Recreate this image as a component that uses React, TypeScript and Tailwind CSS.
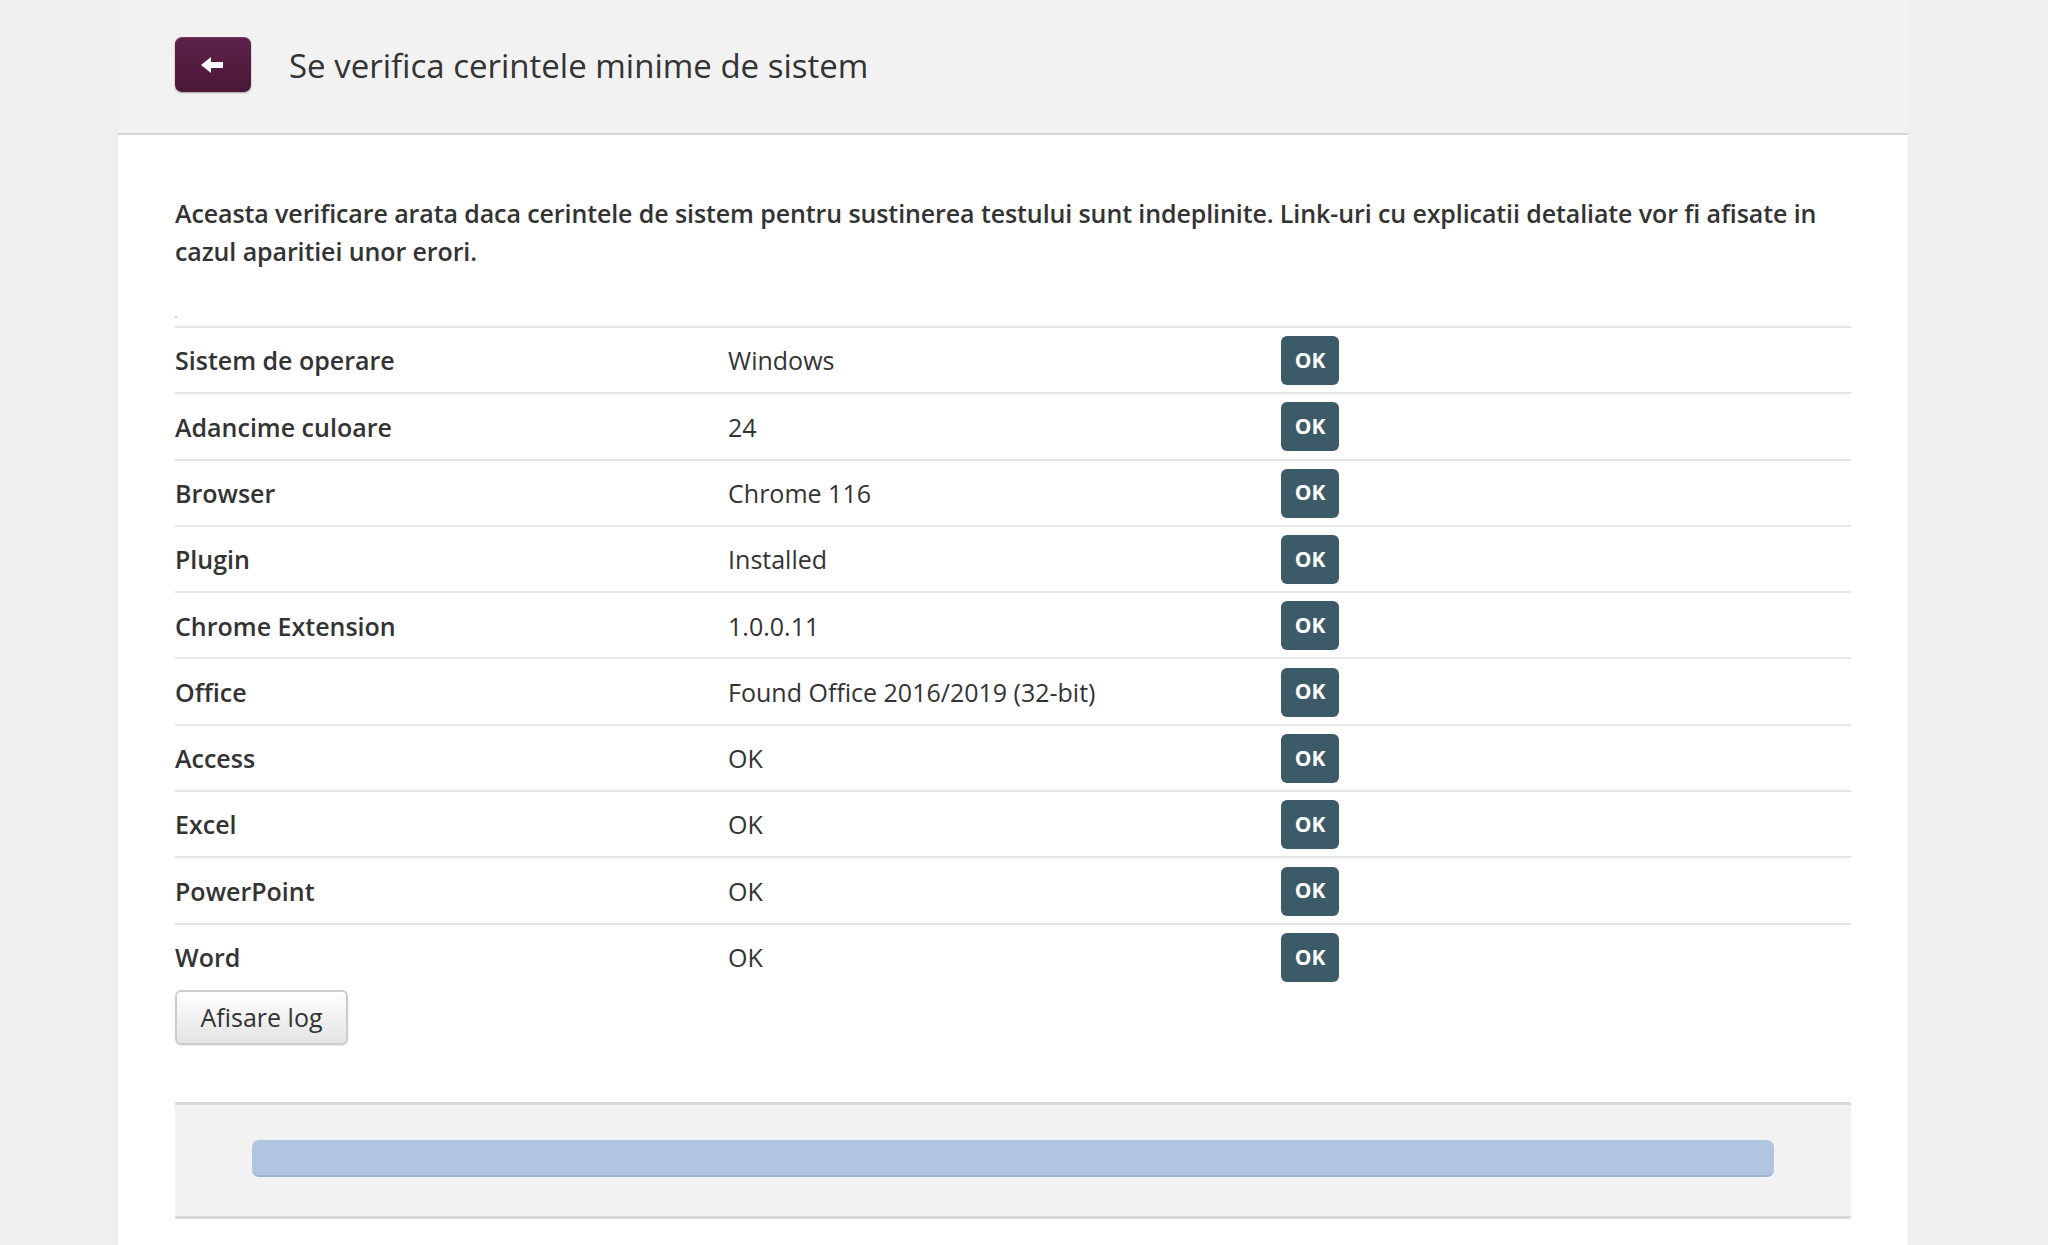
import React from "react";

const rows: [string, string][] = [
  ["Sistem de operare", "Windows"],
  ["Adancime culoare", "24"],
  ["Browser", "Chrome 116"],
  ["Plugin", "Installed"],
  ["Chrome Extension", "1.0.0.11"],
  ["Office", "Found Office 2016/2019 (32-bit)"],
  ["Access", "OK"],
  ["Excel", "OK"],
  ["PowerPoint", "OK"],
  ["Word", "OK"],
];

export default function App() {
  return (
    <div
      className="min-h-[1245px] w-[2048px] bg-[#efefef] text-[#333333]"
      style={{ fontFamily: '"Open Sans", "Noto Sans", sans-serif' }}
    >
      <div className="ml-[118px] w-[1790px] min-h-[1245px] bg-white">
        {/* Header */}
        <div className="h-[135px] bg-[#f2f2f2] border-b-2 border-[#d6d6d6] flex items-center pl-[57px] pb-[4px]">
          <button className="w-[76px] h-[55px] rounded-[7px] bg-gradient-to-b from-[#5e2249] to-[#4a1736] shadow-[0_1px_2px_rgba(0,0,0,0.35)] flex items-center justify-center border-t border-[#7a3a62]">
            <svg width="24" height="16" viewBox="0 0 24 16">
              <path d="M0 8 L10 0 L10 5 L22 5 L22 11 L10 11 L10 16 Z" fill="white" />
            </svg>
          </button>
          <h1 className="ml-[38px] text-[33px] leading-none text-[#333333] pt-[2px]">
            Se verifica cerintele minime de sistem
          </h1>
        </div>

        {/* Body */}
        <div className="px-[57px] pt-[59px]">
          <p className="text-[25px] leading-[38px] font-semibold text-[#333333] whitespace-nowrap tracking-[-0.1px]">
            Aceasta verificare arata daca cerintele de sistem pentru sustinerea testului sunt indeplinite. Link-uri cu explicatii detaliate vor fi afisate in
            <br />
            cazul aparitiei unor erori.
          </p>

          <div className="h-[56px] relative">
            <div className="absolute left-0 top-[46px] w-[2px] h-[2px] bg-[#cfcfcf]" />
          </div>

          <div className="grid grid-cols-[33%_33%_1fr]">
            {rows.map(([label, value], i) => (
              <React.Fragment key={i}>
                <div className="h-[66.3px] pt-[2px] border-t-2 border-[#e6e6e6] flex items-center text-[25px] font-semibold">
                  {label}
                </div>
                <div className="h-[66.3px] pt-[2px] border-t-2 border-[#e6e6e6] flex items-center text-[25px]">
                  {value}
                </div>
                <div className="h-[66.3px] pt-[1px] border-t-2 border-[#e6e6e6] flex items-center">
                  <span className="w-[58px] h-[49px] rounded-[6px] bg-[#3d5a68] text-white font-bold text-[21px] flex items-center justify-center">
                    OK
                  </span>
                </div>
              </React.Fragment>
            ))}
          </div>

          <button className="mt-[1px] w-[173px] h-[55px] rounded-[6px] border-2 border-[#cccccc] bg-gradient-to-b from-white to-[#e4e4e4] text-[25px] text-[#333333] shadow-[0_1px_2px_rgba(0,0,0,0.1)]">
            Afisare log
          </button>

          <div className="mt-[57px] h-[117px] bg-[#f2f2f2] border-t-[3px] border-b-[3px] border-[#d8d8d8] px-[77px] pt-[35px]">
            <div className="h-[37px] rounded-[7px] bg-[#b0c6e0] border-b-2 border-[#9db2cb]" />
          </div>
        </div>
      </div>
    </div>
  );
}
